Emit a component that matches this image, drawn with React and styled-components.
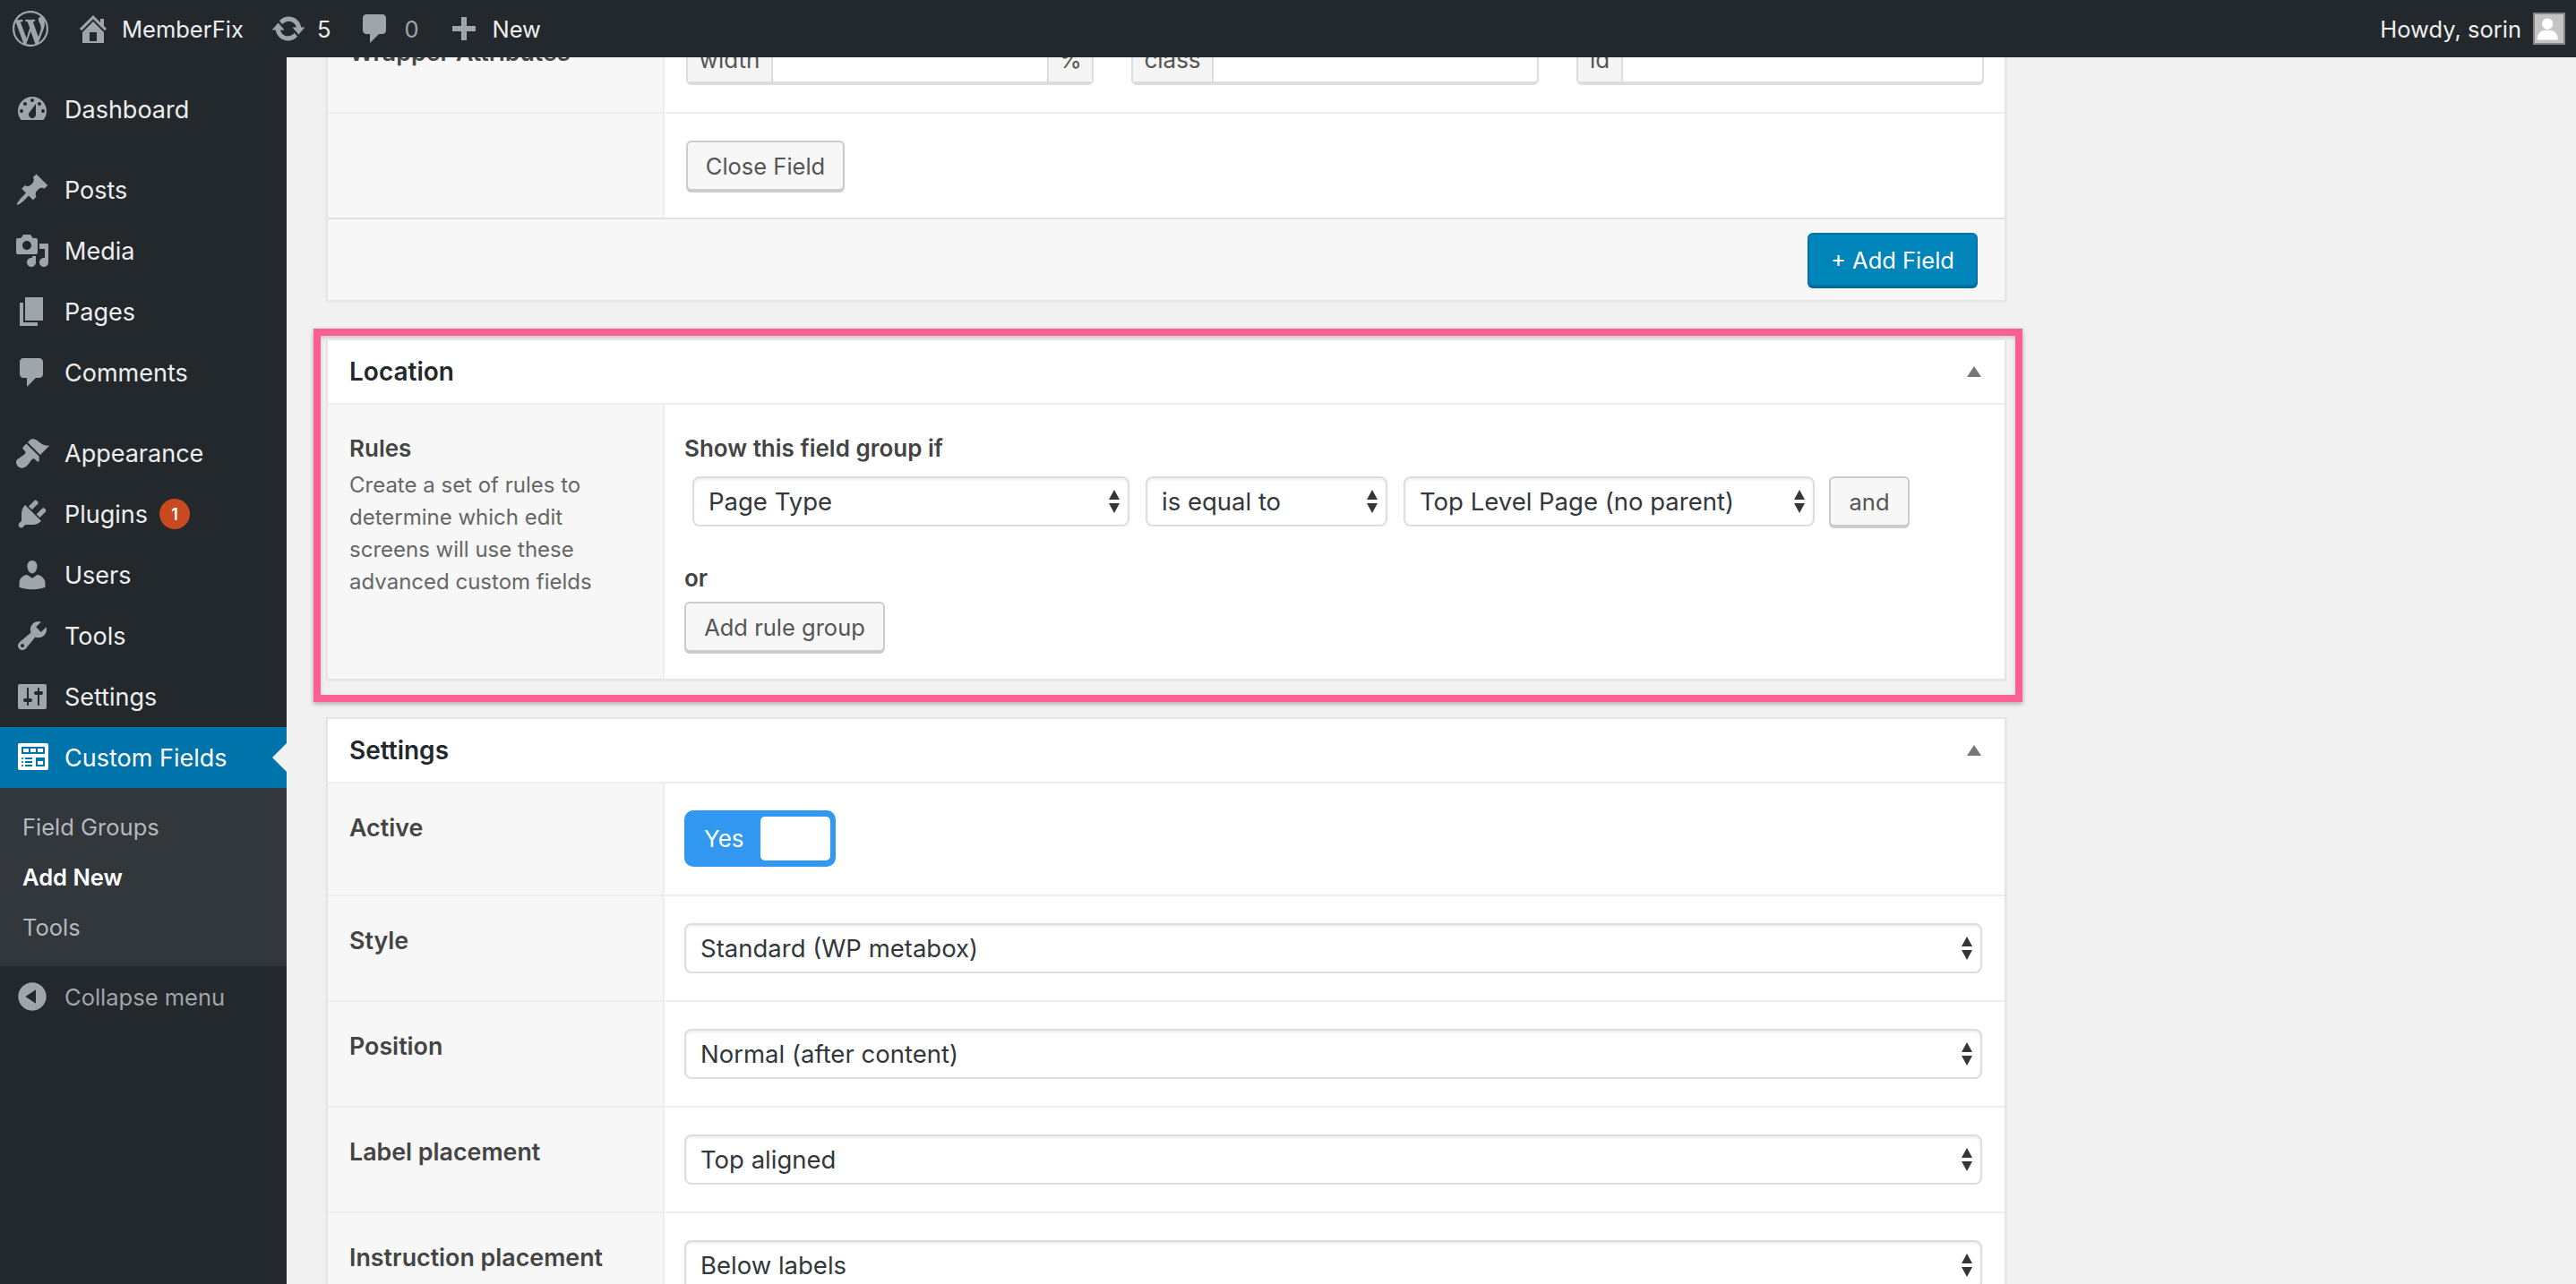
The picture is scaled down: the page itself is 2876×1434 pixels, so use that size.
import React from 'react';
import styled, { createGlobalStyle } from 'styled-components';

const FONT = 'Inter, "Noto Sans", "Liberation Sans", sans-serif';

const ICONS = {
  wordpress: 'M20 10c0-5.51-4.49-10-10-10C4.48 0 0 4.49 0 10c0 5.52 4.48 10 10 10 5.51 0 10-4.48 10-10zM7.78 15.37L4.37 6.22c.55-.02 1.17-.08 1.17-.08.5-.06.44-1.13-.06-1.11 0 0-1.45.11-2.37.11-.18 0-.37 0-.58-.01C4.12 2.69 6.87 1.11 10 1.11c2.33 0 4.45.87 6.05 2.34-.68-.11-1.65.39-1.65 1.58 0 .74.45 1.36.9 2.1.35.61.55 1.36.55 2.46 0 1.49-1.4 5-1.4 5l-3.03-8.37c.54-.02.82-.17.82-.17.5-.05.44-1.25-.06-1.22 0 0-1.44.12-2.38.12-.87 0-2.33-.12-2.33-.12-.5-.03-.56 1.2-.06 1.22l.92.08 1.26 3.41zM17.41 10c.24-.64.74-1.87.43-4.25.7 1.29 1.05 2.71 1.05 4.25 0 3.29-1.73 6.24-4.4 7.78.97-2.59 1.94-5.2 2.92-7.78zM6.1 18.09C3.12 16.65 1.11 13.53 1.11 10c0-1.3.23-2.48.72-3.59C3.25 10.3 4.67 14.2 6.1 18.09zm4.03-6.63l2.58 6.98c-.86.29-1.76.45-2.71.45-.79 0-1.57-.11-2.29-.33.81-2.38 1.62-4.74 2.42-7.1z',
  home: 'M16 8.5l1.53 1.53-1.06 1.06L10 4.62l-6.47 6.47-1.06-1.06L10 2.5l4 4v-2h2v4zm-6-2.46l6 5.99V18H4v-5.97zM12 17v-5H8v5h4z',
  update: 'M10.2 3.28c3.53 0 6.43 2.61 6.92 6h2.08l-3.5 4-3.5-4h2.32c-.45-1.97-2.21-3.45-4.32-3.45-1.45 0-2.73.71-3.54 1.78L4.95 5.66C6.23 4.2 8.11 3.28 10.2 3.28zm-.4 13.44c-3.52 0-6.43-2.61-6.92-6H.8l3.5-4c1.17 1.33 2.33 2.67 3.5 4H5.48c.45 1.97 2.21 3.45 4.32 3.45 1.45 0 2.73-.71 3.54-1.78l1.71 1.95c-1.28 1.46-3.15 2.38-5.25 2.38z',
  comment: 'M5 2h9c1.1 0 2 .9 2 2v7c0 1.1-.9 2-2 2h-2l-5 5v-5H5c-1.1 0-2-.9-2-2V4c0-1.1.9-2 2-2z',
  plus: 'M17 8.5v3h-5v5H9v-5H4v-3h5v-5h3v5h5z',
  dashboard: 'M3.76 16h12.48c1.1-1.37 1.76-3.11 1.76-5 0-4.42-3.58-8-8-8s-8 3.58-8 8c0 1.89.66 3.63 1.76 5zM10 4c.55 0 1 .45 1 1s-.45 1-1 1-1-.45-1-1 .45-1 1-1zM6 6c.55 0 1 .45 1 1s-.45 1-1 1-1-.45-1-1 .45-1 1-1zm8 0c.55 0 1 .45 1 1s-.45 1-1 1-1-.45-1-1 .45-1 1-1zm-5.37 5.55L12 7v6c0 1.1-.9 2-2 2s-2-.9-2-2c0-.57.24-1.08.63-1.45zM4 10c.55 0 1 .45 1 1s-.45 1-1 1-1-.45-1-1 .45-1 1-1zm12 0c.55 0 1 .45 1 1s-.45 1-1 1-1-.45-1-1 .45-1 1-1z',
  post: 'M10.44 3.02l1.82-1.82 6.36 6.35-1.83 1.82c-1.05-.68-2.48-.57-3.41.36l-.75.75c-.92.93-1.04 2.35-.35 3.41l-1.83 1.82-2.41-2.41-2.8 2.79c-.42.42-3.38 2.71-3.8 2.29s1.86-3.39 2.28-3.81l2.79-2.79L4.1 9.36l1.83-1.82c1.05.69 2.48.57 3.4-.36l.75-.75c.93-.92 1.05-2.35.36-3.41z',
  media: 'M13 11V4c0-.55-.45-1-1-1h-1.67L9 1H5L3.67 3H2c-.55 0-1 .45-1 1v7c0 .55.45 1 1 1h10c.55 0 1-.45 1-1zM7 4.5c1.38 0 2.5 1.12 2.5 2.5S8.38 9.5 7 9.5 4.5 8.38 4.5 7 5.62 4.5 7 4.5zM14 6h5v10.5c0 1.38-1.12 2.5-2.5 2.5S14 17.88 14 16.5s1.12-2.5 2.5-2.5c.17 0 .34.02.5.05V9h-3V6zm-4 8.05V13h2v3.5c0 1.38-1.12 2.5-2.5 2.5S7 17.88 7 16.5 8.12 14 9.5 14c.17 0 .34.02.5.05z',
  page: 'M6 15V2h10v13H6zm-1 1h8v2H3V5h2v11z',
  appearance: 'M14.48 11.06L7.41 3.99l1.5-1.5c.5-.56 2.3-.47 3.51.32 1.21.8 1.43 1.28 2.91 2.1 1.18.64 2.45 1.26 4.45.85zm-.71.71L6.7 4.7 4.93 6.47c-.39.39-.39 1.02 0 1.41l1.06 1.06c.39.39.39 1.03 0 1.42-.6.6-1.43 1.11-2.21 1.69-.35.26-.7.53-1.01.84C1.43 13.23.99 14.3 1 15.17c.01.77.34 1.56.99 2.21.65.65 1.44.98 2.21.99.87.01 1.94-.43 3.27-1.76.31-.31.58-.66.84-1.01.58-.78 1.09-1.61 1.69-2.21.39-.39 1.03-.39 1.42 0l1.06 1.06c.39.39 1.02.39 1.41 0z',
  plugins: 'M13.11 4.36L9.87 7.6 8 5.73l3.24-3.24c.35-.34 1.05-.2 1.56.32.52.51.66 1.21.31 1.55zm-8 1.77l.91-1.12 9.01 9.01-1.19.84c-.71.71-2.63 1.16-3.82 1.16H6.14L4.9 17.26c-.59.59-1.54.59-2.12 0-.59-.58-.59-1.53 0-2.12l1.24-1.24v-3.88c0-1.13.4-3.19 1.09-3.89zm7.26 3.97l3.24-3.24c.34-.35 1.04-.21 1.55.31.52.51.66 1.21.31 1.55l-3.24 3.25z',
  users: 'M10 9.25c-2.27 0-2.73-3.44-2.73-3.44C7 4.02 7.82 2 9.97 2c2.16 0 2.98 2.02 2.71 3.81 0 0-.41 3.44-2.68 3.44zm0 2.57L12.72 10c2.39 0 4.52 2.33 4.52 4.53v2.49s-3.65 1.13-7.24 1.13c-3.65 0-7.24-1.13-7.24-1.13v-2.49c0-2.25 1.94-4.48 4.47-4.48z',
  tools: 'M16.68 9.77c-1.34 1.34-3.3 1.67-4.95.99l-5.41 6.52c-.99.99-2.59.99-3.58 0s-.99-2.59 0-3.57l6.52-5.42c-.68-1.65-.35-3.61.99-4.95 1.28-1.28 3.12-1.62 4.72-1.06l-2.89 2.89 2.82 2.82 2.86-2.87c.53 1.58.18 3.39-1.08 4.65zM3.81 16.21c.4.39 1.04.39 1.43 0 .4-.4.4-1.04 0-1.43-.39-.4-1.03-.4-1.43 0-.39.39-.39 1.03 0 1.43z',
  settings: 'M18 16V4c0-.55-.45-1-1-1H3c-.55 0-1 .45-1 1v12c0 .55.45 1 1 1h14c.55 0 1-.45 1-1zM8 11h1c.55 0 1 .45 1 1s-.45 1-1 1H8v1.5c0 .28-.22.5-.5.5s-.5-.22-.5-.5V13H6c-.55 0-1-.45-1-1s.45-1 1-1h1V5.5c0-.28.22-.5.5-.5s.5.22.5.5V11zm5-2h-1c-.55 0-1-.45-1-1s.45-1 1-1h1V5.5c0-.28.22-.5.5-.5s.5.22.5.5V7h1c.55 0 1 .45 1 1s-.45 1-1 1h-1v5.5c0 .28-.22.5-.5.5s-.5-.22-.5-.5V9z',
  fields: 'M19 16V3c0-.55-.45-1-1-1H3c-.55 0-1 .45-1 1v13c0 .55.45 1 1 1h15c.55 0 1-.45 1-1zM4 4h13v4H4V4zm1 1v2h3V5H5zm4 0v2h3V5H9zm4 0v2h3V5h-3zm-8.5 5c.28 0 .5.22.5.5s-.22.5-.5.5-.5-.22-.5-.5.22-.5.5-.5zM6 10h4v1H6v-1zm6 0h5v5h-5v-5zm-7.5 2c.28 0 .5.22.5.5s-.22.5-.5.5-.5-.22-.5-.5.22-.5.5-.5zM6 12h4v1H6v-1zm7 0v2h3v-2h-3zm-8.5 2c.28 0 .5.22.5.5s-.22.5-.5.5-.5-.22-.5-.5.22-.5.5-.5zM6 14h4v1H6v-1z',
  collapse: 'M10 2.16c4.33 0 7.84 3.51 7.84 7.84s-3.51 7.84-7.84 7.84S2.16 14.33 2.16 10 5.71 2.16 10 2.16zm2 11.72V6.12L6.18 9.97z',
};

const GlobalStyle = createGlobalStyle`
  html, body {
    margin: 0;
    height: 100%;
    overflow: hidden;
    background: #f1f1f1;
  }
  * { box-sizing: border-box; }
  body {
    font-family: ${FONT};
    -webkit-font-smoothing: antialiased;
  }
`;

const Glyph = styled.svg.attrs({ viewBox: '0 0 20 20' })`
  width: 40px;
  height: 40px;
  flex: none;
  fill: ${(props) => props.$color || '#a0a5aa'};
`;

const Icon = ({ name, color }) => (
  <Glyph $color={color}><path d={ICONS[name]} /></Glyph>
);

const Page = styled.div`
  width: 2876px;
  height: 1434px;
  display: flex;
  flex-direction: column;
  overflow: hidden;
`;

const AdminBar = styled.header`
  height: 64px;
  flex: none;
  background: #23282d;
  color: #eee;
  display: flex;
  align-items: center;
  padding: 0 12px 0 14px;
  font-size: 25.5px;
  position: relative;
  z-index: 2;
`;

const BarItem = styled.div`
  display: flex;
  align-items: center;
  gap: 12px;
  margin-right: 30px;
`;

const MutedCount = styled.span`
  color: #a0a5aa;
`;

const Howdy = styled.div`
  margin-left: auto;
  display: flex;
  align-items: center;
  gap: 13px;
`;

const Avatar = styled.svg.attrs({ viewBox: '0 0 36 36' })`
  width: 36px;
  height: 36px;
  border: 2px solid #82878c;
  background: #c4c4c4;
  fill: #fff;
`;

const Body = styled.div`
  flex: 1;
  display: flex;
  min-height: 0;
`;

const Sidebar = styled.nav`
  width: 320px;
  flex: none;
  background: #23282d;
  padding-top: 24px;
`;

const MenuItem = styled.div`
  height: 68px;
  display: flex;
  align-items: center;
  padding-left: 16px;
  gap: 16px;
  font-size: 27px;
  color: ${(props) => (props.$active ? '#fff' : '#eee')};
  background: ${(props) => (props.$active ? '#0073aa' : 'transparent')};
  position: relative;
  margin-bottom: ${(props) => (props.$last ? '22px' : '0')};
`;

const Pointer = styled.span`
  position: absolute;
  right: 0;
  top: 18px;
  border: 16px solid transparent;
  border-left-width: 0;
  border-right-color: #f1f1f1;
`;

const Badge = styled.span`
  width: 34px;
  height: 34px;
  border-radius: 50%;
  background: #ca4a1f;
  color: #fff;
  font-size: 18px;
  font-weight: 600;
  display: flex;
  align-items: center;
  justify-content: center;
  margin-left: -3px;
`;

const Submenu = styled.div`
  background: #32373c;
  padding: 15px 0 16px;
`;

const SubItem = styled.div`
  height: 56px;
  padding-left: 25px;
  display: flex;
  align-items: center;
  font-size: 25.5px;
  color: ${(props) => (props.$current ? '#fff' : '#b4b9be')};
  font-weight: ${(props) => (props.$current ? 600 : 400)};
`;

const CollapseItem = styled(MenuItem)`
  color: #a0a5aa;
  font-size: 25.5px;
`;

const Content = styled.main`
  flex: 1;
  min-width: 0;
  padding-left: 30px;
`;

const Panel = styled.section`
  width: 1876px;
  margin-left: 14px;
  background: #fff;
  border: 2px solid #e5e5e5;
  box-shadow: 0 1px 2px rgba(0, 0, 0, 0.04);
`;

const ScrolledPanel = styled(Panel)`
  margin-top: -55px;
  border-top: 0;
`;

const Highlight = styled.div`
  width: 1908px;
  margin: 30px 0 17px;
  border: 8px solid #fc6092;
  padding: 3px 10px 16px 6px;
  box-shadow: 0 2px 5px rgba(0, 0, 0, 0.3), inset 0 2px 4px rgba(0, 0, 0, 0.18);
`;

const HighlightPanel = styled(Panel)`
  margin-left: 0;
`;

const PanelHead = styled.div`
  height: 72px;
  padding: 0 26px 0 24px;
  border-bottom: 2px solid #eee;
  display: flex;
  align-items: center;
  justify-content: space-between;
  font-size: 28px;
  font-weight: 600;
  color: #23282d;
`;

const CollapseArrow = styled.span`
  border: 8px solid transparent;
  border-top-width: 0;
  border-bottom: 12px solid #72777c;
`;

const Row = styled.div`
  display: grid;
  grid-template-columns: 376px 1fr;
  border-bottom: ${(props) => (props.$last ? '0' : '2px solid #eee')};
`;

const LabelCell = styled.div`
  background: #f7f7f7;
  border-right: 2px solid #eee;
  padding: 30px 20px 0 24px;
`;

const FieldCell = styled.div`
  padding: 30px 25px 30px ${(props) => (props.$inset ? '24px' : '22px')};
`;

const LabelText = styled.div`
  font-size: 26px;
  line-height: 38px;
  font-weight: 600;
  color: #444;
`;

const SettingLabel = styled(LabelText)`
  font-size: 26.8px;
`;

const Help = styled.p`
  margin: 4px 0 0;
  font-size: 24px;
  line-height: 36px;
  color: #666;
`;

const SelectBox = styled.div`
  height: 56px;
  width: ${(props) => props.$width || '100%'};
  flex: none;
  background: #fff;
  border: 2px solid #ddd;
  border-radius: 8px;
  box-shadow: inset 0 2px 3px rgba(0, 0, 0, 0.07);
  display: flex;
  align-items: center;
  justify-content: space-between;
  padding: 0 8px 0 16px;
  font-size: 27.5px;
  color: #32373c;
`;

const Updown = styled.svg.attrs({ viewBox: '0 0 14 26' })`
  width: 14px;
  height: 26px;
  fill: #32373c;
`;

const Select = ({ children, width }) => (
  <SelectBox $width={width}>
    {children}
    <Updown><path d="M7 0l6 11H1zM7 26L1 15h12z" /></Updown>
  </SelectBox>
);

const Button = styled.div`
  display: inline-flex;
  align-items: center;
  justify-content: center;
  flex: none;
  height: 56px;
  width: ${(props) => props.$width};
  background: #f7f7f7;
  border: 2px solid #ccc;
  border-radius: 6px;
  box-shadow: 0 2px 0 #ccc;
  font-size: 25.5px;
  color: #555;
`;

const Footer = styled.div`
  height: 92px;
  border-top: 2px solid #e1e1e1;
  background: #f7f7f7;
  display: flex;
  justify-content: flex-end;
  align-items: center;
  padding-right: 30px;
`;

const PrimaryButton = styled.div`
  width: 190px;
  height: 60px;
  background: #0085ba;
  border: 2px solid #0073aa;
  border-radius: 6px;
  box-shadow: 0 2px 0 #006799;
  display: flex;
  align-items: center;
  justify-content: center;
  font-size: 25.5px;
  color: #fff;
`;

const WrapperInputs = styled.div`
  display: grid;
  grid-template-columns: repeat(3, 455px);
  gap: 42px;
`;

const InputGroup = styled.div`
  height: 56px;
  display: flex;
  border: 2px solid #ddd;
  border-bottom-width: 4px;
  border-radius: 6px;
  background: #fff;
  font-size: 26px;
  color: #555;
`;

const Addon = styled.span`
  width: ${(props) => props.$width};
  flex: none;
  background: #f5f5f5;
  display: flex;
  align-items: center;
  justify-content: center;
  border-${(props) => (props.$after ? 'left' : 'right')}: 2px solid #ddd;
`;

const InputFill = styled.span`
  flex: 1;
`;

const RuleRow = styled.div`
  display: flex;
  gap: 18px;
  margin: 12px 0 0 9px;

  > :last-child {
    margin-left: -2px;
  }
`;

const OrLabel = styled(LabelText)`
  margin: 39px 0 7px;
`;

const Toggle = styled.div`
  width: 169px;
  height: 63px;
  margin-bottom: 1px;
  background: #3297f1;
  border-radius: 10px;
  display: flex;
  align-items: center;
  justify-content: space-between;
  padding: 0 6px 0 22px;
  color: #fff;
  font-size: 26px;
`;

const Thumb = styled.span`
  width: 78px;
  height: 49px;
  background: #fff;
  border-radius: 5px;
`;

const SETTINGS_ROWS = [
  ['Style', 'Standard (WP metabox)'],
  ['Position', 'Normal (after content)'],
  ['Label placement', 'Top aligned'],
  ['Instruction placement', 'Below labels'],
];

const MENU_TOP = [
  [{ icon: 'dashboard', label: 'Dashboard' }],
  [
    { icon: 'post', label: 'Posts' },
    { icon: 'media', label: 'Media' },
    { icon: 'page', label: 'Pages' },
    { icon: 'comment', label: 'Comments' },
  ],
  [
    { icon: 'appearance', label: 'Appearance' },
    { icon: 'plugins', label: 'Plugins', badge: 1 },
    { icon: 'users', label: 'Users' },
    { icon: 'tools', label: 'Tools' },
    { icon: 'settings', label: 'Settings' },
  ],
];

const App = () => (
  <Page>
    <GlobalStyle />
    <AdminBar>
      <BarItem><Icon name="wordpress" /></BarItem>
      <BarItem><Icon name="home" />MemberFix</BarItem>
      <BarItem><Icon name="update" />5</BarItem>
      <BarItem><Icon name="comment" /><MutedCount>0</MutedCount></BarItem>
      <BarItem><Icon name="plus" />New</BarItem>
      <Howdy>
        Howdy, sorin
        <Avatar>
          <circle cx="16" cy="12" r="7" />
          <path d="M3 32c0-8 4-11 9-12h8c5 1 9 4 9 12z" />
        </Avatar>
      </Howdy>
    </AdminBar>
    <Body>
      <Sidebar>
        {MENU_TOP.map((group, g) => group.map((item, i) => (
          <MenuItem key={item.label} $last={i === group.length - 1 && g < 2}>
            <Icon name={item.icon} />
            {item.label}
            {item.badge && <Badge>{item.badge}</Badge>}
          </MenuItem>
        )))}
        <MenuItem $active>
          <Icon name="fields" color="#fff" />
          Custom Fields
          <Pointer />
        </MenuItem>
        <Submenu>
          <SubItem>Field Groups</SubItem>
          <SubItem $current>Add New</SubItem>
          <SubItem>Tools</SubItem>
        </Submenu>
        <CollapseItem>
          <Icon name="collapse" />
          Collapse menu
        </CollapseItem>
      </Sidebar>
      <Content>
        <ScrolledPanel>
          <Row>
            <LabelCell><SettingLabel>Wrapper Attributes</SettingLabel></LabelCell>
            <FieldCell $inset>
              <WrapperInputs>
                <InputGroup>
                  <Addon $width="95px">width</Addon>
                  <InputFill />
                  <Addon $width="50px" $after>%</Addon>
                </InputGroup>
                <InputGroup>
                  <Addon $width="90px">class</Addon>
                  <InputFill />
                </InputGroup>
                <InputGroup>
                  <Addon $width="50px">id</Addon>
                  <InputFill />
                </InputGroup>
              </WrapperInputs>
            </FieldCell>
          </Row>
          <Row $last>
            <LabelCell />
            <FieldCell $inset>
              <Button $width="177px">Close Field</Button>
            </FieldCell>
          </Row>
          <Footer>
            <PrimaryButton>+ Add Field</PrimaryButton>
          </Footer>
        </ScrolledPanel>

        <Highlight>
          <HighlightPanel>
            <PanelHead>
              Location
              <CollapseArrow />
            </PanelHead>
            <Row $last>
              <LabelCell>
                <LabelText>Rules</LabelText>
                <Help>
                  Create a set of rules to determine which edit screens will use
                  these advanced custom fields
                </Help>
              </LabelCell>
              <FieldCell>
                <LabelText>Show this field group if</LabelText>
                <RuleRow>
                  <Select width="488px">Page Type</Select>
                  <Select width="270px">is equal to</Select>
                  <Select width="459px">Top Level Page (no parent)</Select>
                  <Button $width="90px">and</Button>
                </RuleRow>
                <OrLabel>or</OrLabel>
                <Button $width="224px">Add rule group</Button>
              </FieldCell>
            </Row>
          </HighlightPanel>
        </Highlight>

        <Panel>
          <PanelHead>
            Settings
            <CollapseArrow />
          </PanelHead>
          <Row>
            <LabelCell><SettingLabel>Active</SettingLabel></LabelCell>
            <FieldCell>
              <Toggle>Yes<Thumb /></Toggle>
            </FieldCell>
          </Row>
          {SETTINGS_ROWS.map(([label, value]) => (
            <Row key={label}>
              <LabelCell><SettingLabel>{label}</SettingLabel></LabelCell>
              <FieldCell><Select>{value}</Select></FieldCell>
            </Row>
          ))}
        </Panel>
      </Content>
    </Body>
  </Page>
);

export default App;
